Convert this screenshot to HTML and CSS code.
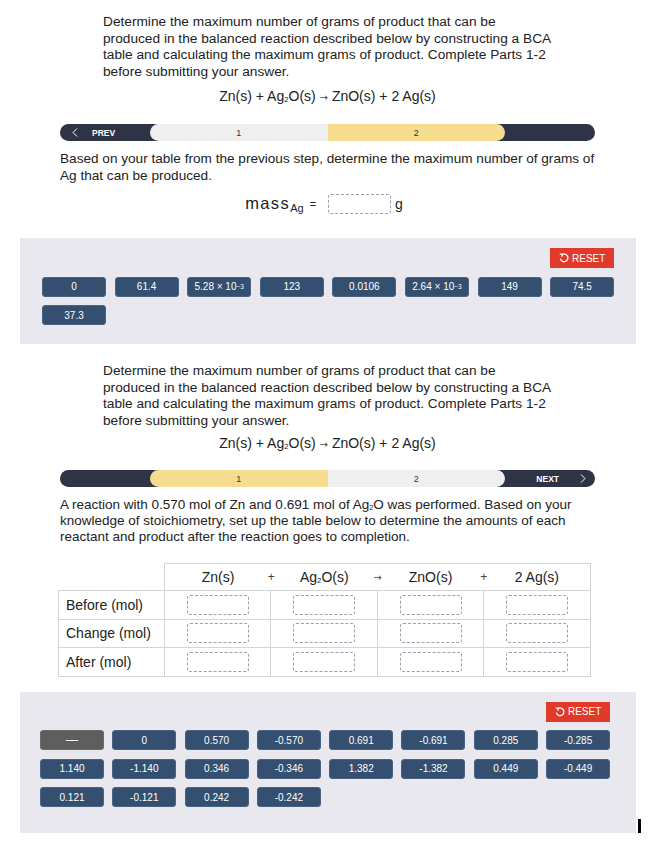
FILE: index.html
```html
<!DOCTYPE html>
<html lang="en">
<head>
<meta charset="utf-8">
<title>BCA Table</title>
<link rel="stylesheet" href="styles.css">
</head>
<body>
<div class="page">
  <section class="intro">
    <p class="intro-text">Determine the maximum number of grams of product that can be produced in the balanced reaction described below by constructing a BCA table and calculating the maximum grams of product. Complete Parts 1-2 before submitting your answer.</p>
  </section>
  <p class="equation">Zn(s) + Ag<sub>2</sub>O(s) <span class="arrow">→</span> ZnO(s) + 2 Ag(s)</p>

  <nav class="stepper">
    <div class="stepper-side stepper-prev">
      <svg class="chev" width="6" height="9" viewBox="0 0 6 9"><path d="M5 0.5 L1 4.5 L5 8.5" fill="none" stroke="#fff" stroke-width="1"/></svg>
      <span>PREV</span>
    </div>
    <div class="stepper-track">
      <div class="step step-light step-first">1</div>
      <div class="step step-yellow step-last">2</div>
    </div>
    <div class="stepper-side"></div>
  </nav>

  <p class="question">Based on your table from the previous step, determine the maximum number of grams of Ag that can be produced.</p>

  <div class="mass-row">
    <span class="mass-label">mass<sub>Ag</sub></span>
    <span class="mass-eq">=</span>
    <span class="answer-box"></span>
    <span class="mass-unit">g</span>
  </div>

  <section class="panel panel-one">
    <div class="tile-grid tile-grid-one">
      <button class="reset"><svg width="10" height="10" viewBox="0 0 12 12"><path d="M3.2 2.2 A4.6 4.6 0 1 1 1.6 6.8" fill="none" stroke="#fff" stroke-width="1.5"/><path d="M0.8 1.2 L4.4 1.6 L3.2 4.6" fill="none" stroke="#fff" stroke-width="1.4"/></svg>RESET</button>
      <span class="tile">0</span>
      <span class="tile">61.4</span>
      <span class="tile">5.28 × 10<sup>−3</sup></span>
      <span class="tile">123</span>
      <span class="tile">0.0106</span>
      <span class="tile">2.64 × 10<sup>−3</sup></span>
      <span class="tile">149</span>
      <span class="tile">74.5</span>
      <span class="tile">37.3</span>
    </div>
  </section>

  <section class="intro intro-two">
    <p class="intro-text">Determine the maximum number of grams of product that can be produced in the balanced reaction described below by constructing a BCA table and calculating the maximum grams of product. Complete Parts 1-2 before submitting your answer.</p>
  </section>
  <p class="equation equation-two">Zn(s) + Ag<sub>2</sub>O(s) <span class="arrow">→</span> ZnO(s) + 2 Ag(s)</p>

  <nav class="stepper stepper-two">
    <div class="stepper-side"></div>
    <div class="stepper-track">
      <div class="step step-yellow step-first">1</div>
      <div class="step step-light step-last">2</div>
    </div>
    <div class="stepper-side stepper-next">
      <span>NEXT</span>
      <svg class="chev" width="6" height="9" viewBox="0 0 6 9"><path d="M1 0.5 L5 4.5 L1 8.5" fill="none" stroke="#fff" stroke-width="1"/></svg>
    </div>
  </nav>

  <p class="question question-two">A reaction with 0.570 mol of Zn and 0.691 mol of Ag<sub>2</sub>O was performed. Based on your knowledge of stoichiometry, set up the table below to determine the amounts of each reactant and product after the reaction goes to completion.</p>

  <table class="bca">
    <thead>
      <tr>
        <th class="corner"></th>
        <th class="species-head" colspan="4">
          <div class="species-row">
            <span class="species">Zn(s)</span>
            <span class="op">+</span>
            <span class="species">Ag<sub>2</sub>O(s)</span>
            <span class="op op-arrow">→</span>
            <span class="species">ZnO(s)</span>
            <span class="op">+</span>
            <span class="species">2 Ag(s)</span>
          </div>
        </th>
      </tr>
    </thead>
    <tbody>
      <tr>
        <th class="row-label">Before (mol)</th>
        <td><span class="answer-box"></span></td>
        <td><span class="answer-box"></span></td>
        <td><span class="answer-box"></span></td>
        <td><span class="answer-box"></span></td>
      </tr>
      <tr>
        <th class="row-label">Change (mol)</th>
        <td><span class="answer-box"></span></td>
        <td><span class="answer-box"></span></td>
        <td><span class="answer-box"></span></td>
        <td><span class="answer-box"></span></td>
      </tr>
      <tr>
        <th class="row-label">After (mol)</th>
        <td><span class="answer-box"></span></td>
        <td><span class="answer-box"></span></td>
        <td><span class="answer-box"></span></td>
        <td><span class="answer-box"></span></td>
      </tr>
    </tbody>
  </table>

  <div class="panel-row">
    <section class="panel panel-two">
      <div class="tile-grid tile-grid-two">
        <button class="reset"><svg width="10" height="10" viewBox="0 0 12 12"><path d="M3.2 2.2 A4.6 4.6 0 1 1 1.6 6.8" fill="none" stroke="#fff" stroke-width="1.5"/><path d="M0.8 1.2 L4.4 1.6 L3.2 4.6" fill="none" stroke="#fff" stroke-width="1.4"/></svg>RESET</button>
        <span class="tile tile-blank">—</span>
        <span class="tile">0</span>
        <span class="tile">0.570</span>
        <span class="tile">-0.570</span>
        <span class="tile">0.691</span>
        <span class="tile">-0.691</span>
        <span class="tile">0.285</span>
        <span class="tile">-0.285</span>
        <span class="tile">1.140</span>
        <span class="tile">-1.140</span>
        <span class="tile">0.346</span>
        <span class="tile">-0.346</span>
        <span class="tile">1.382</span>
        <span class="tile">-1.382</span>
        <span class="tile">0.449</span>
        <span class="tile">-0.449</span>
        <span class="tile">0.121</span>
        <span class="tile">-0.121</span>
        <span class="tile">0.242</span>
        <span class="tile">-0.242</span>
      </div>
    </section>
    <span class="caret"></span>
  </div>
</div>
</body>
</html>
```

FILE: styles.css
```css
* { box-sizing: border-box; }

body {
  margin: 0;
  background: #ffffff;
  color: #222222;
  font-family: "Liberation Sans", Arial, sans-serif;
}

.page {
  width: 653px;
}

p { margin: 0; }

sub {
  font-size: 0.55em;
  vertical-align: -0.15em;
  line-height: 1;
}

/* intro */
.intro {
  padding: 14px 0 0 103px;
  width: 553px;
}

.intro-two {
  padding-top: 19px;
}

.intro-text {
  font-size: 13.7px;
  line-height: 16.5px;
}

.equation {
  margin-top: 8px;
  padding-left: 2px;
  text-align: center;
  font-size: 14px;
  line-height: 17px;
}

.equation-two {
  margin-top: 6px;
}

.arrow {
  font-family: "DejaVu Sans", sans-serif;
  font-size: 10px;
  color: #444;
}

/* stepper */
.stepper {
  margin: 18px 0 0 60px;
  width: 535px;
  height: 17px;
  border-radius: 9px;
  background: #2e3446;
  display: flex;
  align-items: stretch;
}

.stepper-two {
  margin-top: 17px;
}

.stepper-side {
  width: 90px;
  display: flex;
  align-items: center;
  color: #ffffff;
  font-size: 8.5px;
  font-weight: bold;
}

.stepper-prev {
  padding-left: 12px;
  gap: 14px;
}

.stepper-next {
  justify-content: flex-end;
  padding-right: 9px;
  gap: 21px;
}

.stepper-track {
  flex: 1;
  display: flex;
}

.step {
  flex: 1;
  display: flex;
  align-items: center;
  justify-content: center;
  font-size: 9px;
  color: #333;
}

.step-light { background: #efefef; }
.step-yellow { background: #f5dc8f; }
.step-first { border-radius: 9px 0 0 9px; }
.step-last { border-radius: 0 9px 9px 0; }

/* question */
.question {
  margin: 9px 0 0 60px;
  width: 545px;
  font-size: 13.6px;
  line-height: 17px;
}

.question-two {
  margin-top: 10px;
  width: 530px;
  font-size: 13.5px;
  line-height: 16px;
}

/* mass row */
.mass-row {
  margin-top: 10px;
  display: flex;
  justify-content: center;
  align-items: center;
  height: 20px;
  padding-right: 5px;
  font-size: 14px;
}

.mass-label {
  font-size: 16.5px;
  letter-spacing: 1.4px;
}

.mass-label sub {
  font-size: 11px;
  letter-spacing: 0;
  vertical-align: -3px;
}

.mass-eq {
  margin: 0 12px 0 6px;
  font-size: 11px;
}

.mass-unit {
  margin-left: 4px;
}

.answer-box {
  display: inline-block;
  width: 63px;
  height: 20px;
  border: 1px dashed #9aa0aa;
  border-radius: 3px;
  background: #fff;
  vertical-align: middle;
}

/* panels */
.panel {
  background: #e8e8ee;
}

.panel-one {
  margin: 24px 0 0 20px;
  width: 616px;
  padding: 10px 0 19px 22px;
}

.tile-grid {
  display: grid;
  grid-template-columns: repeat(8, 64px);
  row-gap: 8.5px;
}

.tile-grid-one {
  column-gap: 8.6px;
}

.tile-grid-two {
  column-gap: 8.3px;
}

.reset {
  grid-column: 8;
  height: 20px;
  border: none;
  background: #e13a2b;
  color: #ffffff;
  font-family: inherit;
  font-size: 10px;
  display: flex;
  align-items: center;
  justify-content: center;
  gap: 3px;
  padding: 0;
}

.tile {
  height: 20px;
  border-radius: 3px;
  background: #344f6f;
  color: #ffffff;
  font-size: 10px;
  display: flex;
  align-items: center;
  justify-content: center;
  border: 1px solid #4a6283;
}

.tile sup {
  font-size: 6.5px;
  vertical-align: 4px;
  line-height: 0;
}

.tile-blank {
  background: #5e5e5e;
  border-color: #6a6a6a;
  font-size: 12px;
}

/* table */
.bca {
  margin: 18px 0 0 58px;
  width: 533px;
  border-collapse: collapse;
  font-size: 14px;
}

.bca th,
.bca td {
  padding: 0;
  font-weight: normal;
}

.corner {
  width: 106px;
  border: none;
}

.species-head {
  height: 27px;
  border: 1px solid #d4d4d4;
}

.species-row {
  display: grid;
  grid-template-columns: 1fr 0 1fr 0 1fr 0 1fr;
  align-items: center;
}

.species {
  text-align: center;
}

.op {
  display: flex;
  justify-content: center;
  width: 0;
  overflow: visible;
  font-size: 12px;
  color: #444;
}

.op-arrow {
  font-family: "DejaVu Sans", sans-serif;
  font-size: 10px;
}

.row-label {
  text-align: left;
  padding-left: 7px !important;
  height: 28.5px;
  border: 1px solid #d4d4d4;
  white-space: nowrap;
}

.bca td {
  text-align: center;
  border: 1px solid #d4d4d4;
  width: 107px;
}

.bca td .answer-box {
  width: 62px;
}

/* bottom panel */
.panel-row {
  display: flex;
  align-items: flex-end;
  margin-top: 15px;
}

.panel-two {
  margin-left: 20px;
  width: 616px;
  padding: 10px 0 25.5px 20px;
}

.caret {
  width: 3px;
  height: 16px;
  background: #000;
  margin: 0 0 -2px 2px;
}
```
